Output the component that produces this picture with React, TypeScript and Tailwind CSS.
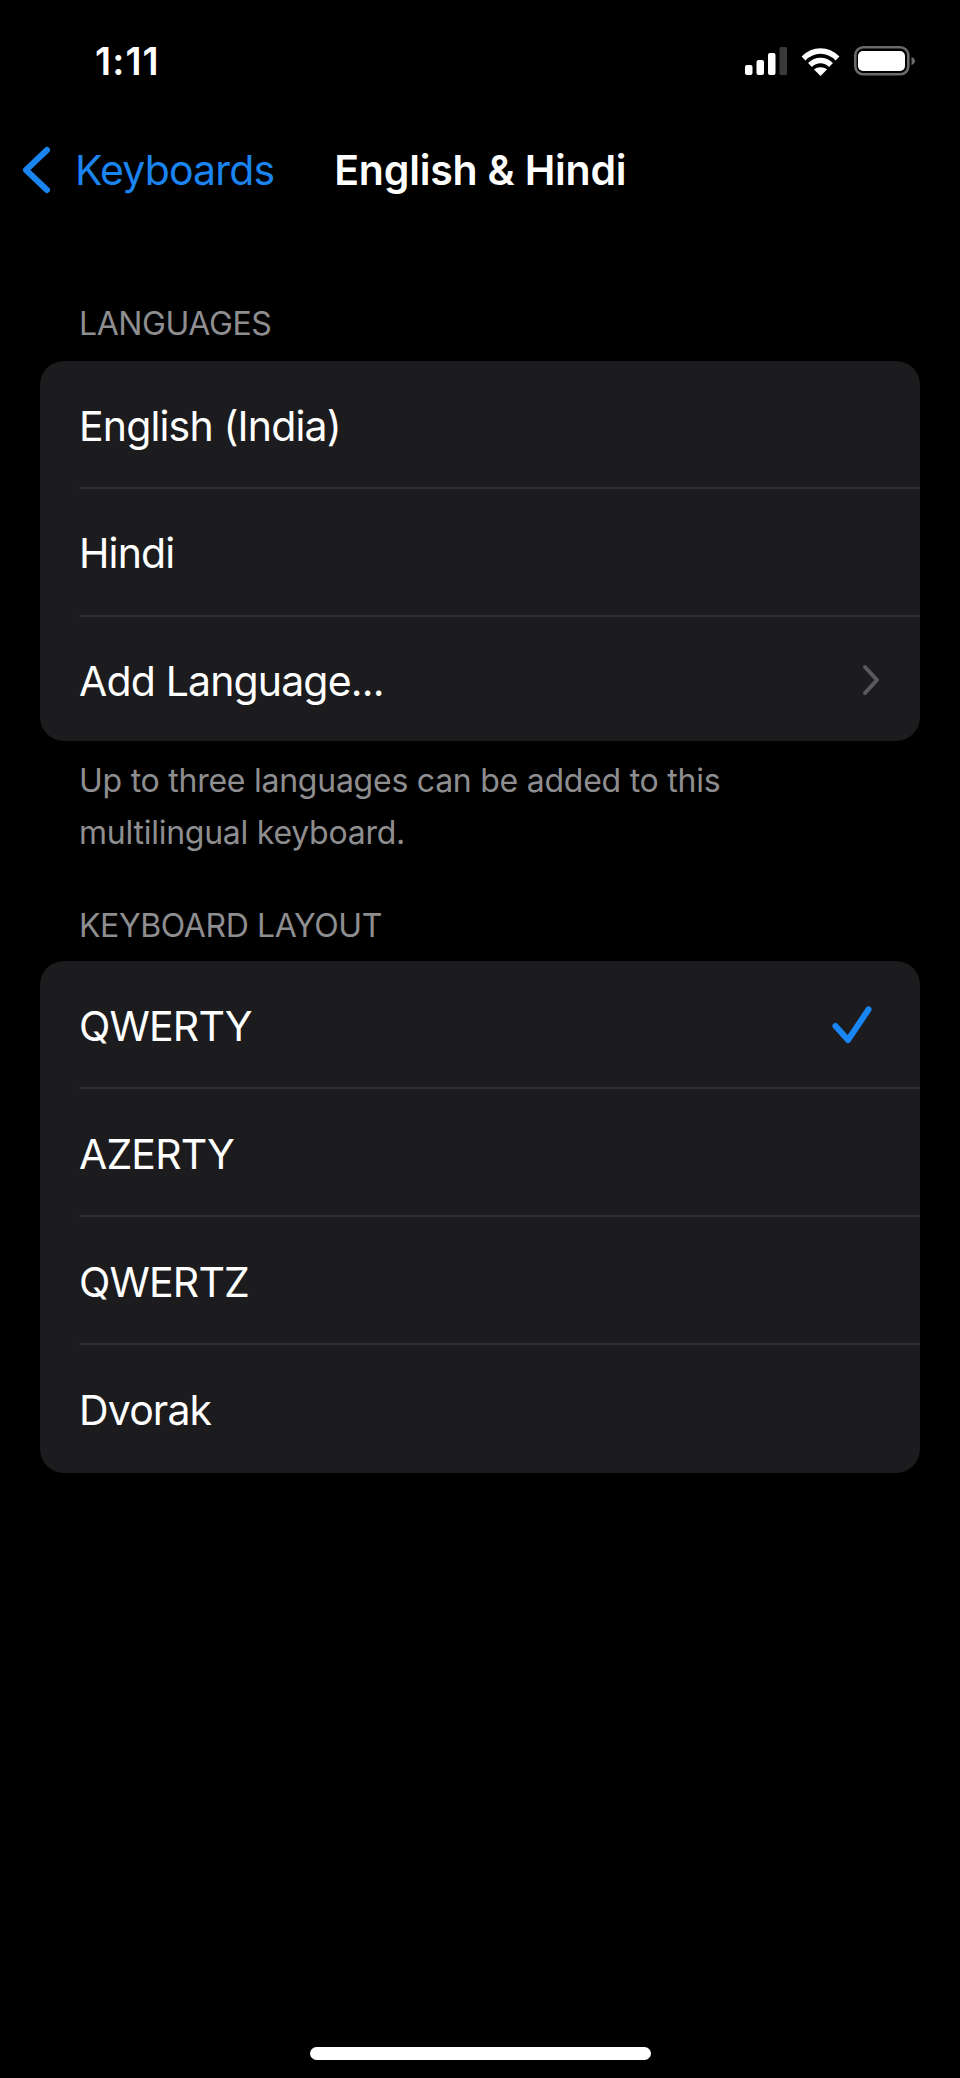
import React from "react";

function Row({ label, last, right, className }: { label: string; last?: boolean; right?: React.ReactNode; className?: string }) {
  return (
    <div className={"relative flex items-center justify-between pl-[39px] pr-10 " + (className ?? "h-[128px] pt-[2px]")}>
      <span className="text-[41px] leading-none text-white tracking-[-0.85px]">{label}</span>
      {right}
      {!last && <div className="absolute left-[39px] right-0 bottom-0 h-[2px] bg-[#2f2f33]" />}
    </div>
  );
}

function Card({ children }: { children: React.ReactNode }) {
  return <div className="mx-10 rounded-[24px] bg-[#1c1c1e] overflow-hidden">{children}</div>;
}

function Header({ children, className }: { children: React.ReactNode; className?: string }) {
  return <div className={"pl-[79px] text-[32px] leading-[36px] text-[#8e8e90] tracking-[-0.4px] " + (className ?? "")}>{children}</div>;
}

export default function App() {
  return (
    <div className="relative w-[960px] h-[2078px] bg-black overflow-hidden font-['Inter',sans-serif]">
      <div className="h-[122px] flex items-center justify-between pl-[95px] pr-[45px]">
        <span className="text-[38px] font-semibold text-white leading-none tracking-[1.1px]">1:11</span>
        <div className="flex items-center gap-[14px]">
          <svg width="42" height="28" viewBox="0 0 42 28">
            <rect x="0" y="18" width="7.5" height="10" rx="2" fill="#fff" />
            <rect x="11.5" y="13" width="7.5" height="15" rx="2" fill="#fff" />
            <rect x="23" y="6" width="7.5" height="22" rx="2" fill="#fff" />
            <rect x="34.5" y="0" width="7.5" height="28" rx="1.5" fill="#3a3a3c" />
          </svg>
          <svg width="39" height="29" viewBox="0 0 39 29" fill="none" stroke="#fff" strokeWidth="5.5">
            <path d="M2.5 11.5C12.5 1.5 26.5 1.5 36.5 11.5" />
            <path d="M9 18C15 12 24 12 30 18" />
            <path d="M19.5 29L13 22.5C16.5 19.5 22.5 19.5 26 22.5Z" fill="#fff" stroke="none" />
          </svg>
          <svg width="61" height="30" viewBox="0 0 61 30" fill="none">
            <rect x="1.3" y="1.3" width="53" height="27" rx="8" stroke="#6a6a6c" strokeWidth="2.6" />
            <rect x="4" y="5" width="47" height="20" rx="5" fill="#fff" />
            <path d="M57.5 11C60 12 61 13.5 61 15C61 16.5 60 18 57.5 19Z" fill="#6a6a6c" />
          </svg>
        </div>
      </div>

      <div className="relative h-[96px] flex items-center">
        <svg className="absolute left-[20px] top-[24px]" width="32" height="48" viewBox="0 0 32 48" fill="none">
          <path d="M27 4L6 24L27 44" stroke="#1a84f0" strokeWidth="6" strokeLinecap="round" strokeLinejoin="round" />
        </svg>
        <span className="ml-[75px] text-[41px] leading-none text-[#1a84f0] tracking-[-0.85px]">Keyboards</span>
        <span className="ml-[60px] text-[41px] leading-none font-semibold text-white tracking-[-0.2px]">English &amp; Hindi</span>
      </div>

      <Header className="mt-[88px]">LANGUAGES</Header>
      <div className="mt-[19px]">
        <Card>
          <Row label="English (India)" />
          <Row label="Hindi" className="h-[128px]" />
          <Row
            label="Add Language..."
            last
            className="h-[124px] pt-[4px]"
            right={
              <svg className="-mt-[2px]" width="18" height="32" viewBox="0 0 18 32" fill="none">
                <path d="M3 3L15 16L3 29" stroke="#5a5a5e" strokeWidth="4" strokeLinecap="round" strokeLinejoin="round" />
              </svg>
            }
          />
        </Card>
      </div>

      <div className="pl-[79px] mt-[14px] text-[32px] leading-[52px] text-[#8e8e90] tracking-[-0.25px]">
        Up to three languages can be added to this
        <br />
        multilingual keyboard.
      </div>

      <Header className="mt-[49px]">KEYBOARD LAYOUT</Header>
      <div className="mt-[17px]">
        <Card>
          <Row
            label="QWERTY"
            right={
              <svg className="mr-2 -mt-[2px]" width="40" height="40" viewBox="0 0 40 40" fill="none">
                <path d="M3.5 21L16 35L36.5 4.5" stroke="#1a86f5" strokeWidth="6" strokeLinecap="round" strokeLinejoin="round" />
              </svg>
            }
          />
          <Row label="AZERTY" />
          <Row label="QWERTZ" />
          <Row label="Dvorak" last />
        </Card>
      </div>

      <div className="absolute left-[310px] top-[2047px] w-[341px] h-[13px] rounded-full bg-white" />
    </div>
  );
}
